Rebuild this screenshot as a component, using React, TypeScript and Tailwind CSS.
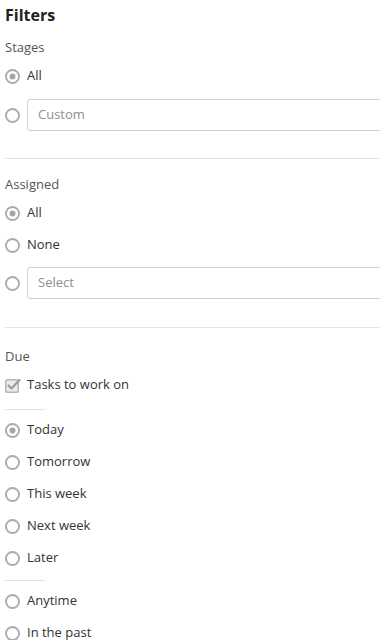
import React from "react";

const font = { fontFamily: '"Open Sans", "Noto Sans", sans-serif' };

function Radio({ checked }: { checked?: boolean }) {
  return (
    <svg width="15" height="15" viewBox="0 0 15 15" className="shrink-0">
      <circle cx="7.5" cy="7.5" r="6.5" fill="white" stroke="#ababab" strokeWidth="1.9" />
      {checked && <circle cx="7.5" cy="7.5" r="3" fill="#a6a6a6" />}
    </svg>
  );
}

function Check() {
  return (
    <svg width="17" height="15" viewBox="0 0 17 15" className="shrink-0">
      <rect x="0.75" y="1.75" width="12.5" height="12.5" rx="1.5" fill="#ececec" stroke="#b5b5b5" strokeWidth="1.5" />
      <path d="M3.5 7.5 L6.5 10.5 L14.5 2" fill="none" stroke="#9a9a9a" strokeWidth="2.2" strokeLinecap="round" strokeLinejoin="round" />
    </svg>
  );
}

function RadioRow({ label, checked, className = "" }: { label: string; checked?: boolean; className?: string }) {
  return (
    <div className={`flex h-[32px] items-center gap-[7px] ${className}`}>
      <Radio checked={checked} />
      <span className="text-[13px] text-[#333]">{label}</span>
    </div>
  );
}

function InputRow({ placeholder, className = "" }: { placeholder: string; className?: string }) {
  return (
    <div className={`flex h-[32px] items-center gap-[7px] ${className}`}>
      <Radio />
      <div className="-mr-[6px] flex h-[32px] flex-1 items-center rounded-[3px] border border-[#d0d0d0] pl-[10px]">
        <span className="text-[13px] text-[#8f8f8f]">{placeholder}</span>
      </div>
    </div>
  );
}

function Label({ text, className = "" }: { text: string; className?: string }) {
  return <div className={`flex h-[24px] items-center text-[13px] text-[#555] ${className}`}>{text}</div>;
}

export default function App() {
  return (
    <div className="h-[640px] w-[380px] overflow-hidden bg-white pl-[5px]" style={font}>
      <div className="flex h-[30px] items-center text-[16px] font-bold text-[#222]">Filters</div>
      <Label text="Stages" className="mt-[6px]" />
      <RadioRow label="All" checked />
      <InputRow placeholder="Custom" className="mt-[7px]" />
      <div className="mt-[27px] h-px bg-[#e3e3e3]" />
      <Label text="Assigned" className="mt-[14px]" />
      <RadioRow label="All" checked />
      <RadioRow label="None" />
      <InputRow placeholder="Select" className="mt-[6px]" />
      <div className="mt-[28px] h-px bg-[#e3e3e3]" />
      <Label text="Due" className="mt-[17px]" />
      <div className="flex h-[32px] items-center gap-[5px]">
        <Check />
        <span className="text-[13px] text-[#333]">Tasks to work on</span>
      </div>
      <div className="mt-[8px] h-px w-[40px] bg-[#e3e3e3]" />
      <RadioRow label="Today" checked className="mt-[4px]" />
      <RadioRow label="Tomorrow" />
      <RadioRow label="This week" />
      <RadioRow label="Next week" />
      <RadioRow label="Later" />
      <div className="mt-[6px] h-px w-[40px] bg-[#e3e3e3]" />
      <RadioRow label="Anytime" className="mt-[4px]" />
      <RadioRow label="In the past" />
    </div>
  );
}
